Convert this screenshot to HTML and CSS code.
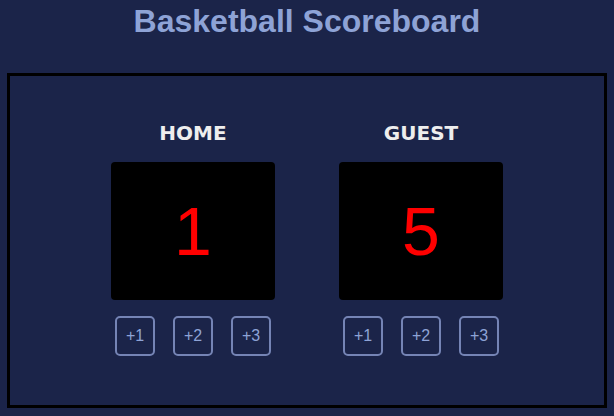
FILE: index.html
```html
<!DOCTYPE html>
<html lang="en">
<head>
<meta charset="utf-8">
<title>Basketball Scoreboard</title>
<link rel="stylesheet" href="styles.css">
</head>
<body>
  <h1 class="title">Basketball Scoreboard</h1>
  <main class="board">
    <section class="team">
      <h2 class="team-name">HOME</h2>
      <div class="score">1</div>
      <div class="buttons">
        <button class="add">+1</button>
        <button class="add">+2</button>
        <button class="add">+3</button>
      </div>
    </section>
    <section class="team">
      <h2 class="team-name">GUEST</h2>
      <div class="score">5</div>
      <div class="buttons">
        <button class="add">+1</button>
        <button class="add">+2</button>
        <button class="add">+3</button>
      </div>
    </section>
  </main>
</body>
</html>
```
FILE: styles.css
```css
body {
  margin: 0;
  background: #1b2449;
  font-family: "Liberation Sans", Arial, sans-serif;
}

.title {
  margin: 0 0 33px;
  padding-top: 3px;
  font-size: 32px;
  line-height: 37px;
  font-weight: bold;
  color: #8ea3d6;
  text-align: center;
}

.board {
  box-sizing: border-box;
  width: 600px;
  height: 335px;
  margin: 0 auto;
  border: 3px solid #000;
  padding-top: 46px;
  display: flex;
  justify-content: center;
  gap: 64px;
}

.team {
  display: flex;
  flex-direction: column;
  align-items: center;
}

.team-name {
  margin: 0 0 17px;
  font-family: "DejaVu Sans", Verdana, sans-serif;
  font-size: 20px;
  line-height: 23px;
  font-weight: bold;
  color: #eeeeee;
}

.score {
  width: 164px;
  height: 138px;
  border-radius: 4px;
  background: #000;
  color: #ff0000;
  font-size: 68px;
  display: flex;
  align-items: center;
  justify-content: center;
}

.buttons {
  margin-top: 16px;
  display: flex;
  gap: 18px;
}

.add {
  box-sizing: border-box;
  width: 40px;
  height: 40px;
  padding: 0;
  border: 2px solid #7584b5;
  border-radius: 5px;
  background: transparent;
  color: #8ea3d6;
  font-family: "Liberation Sans", Arial, sans-serif;
  font-size: 16px;
}
```
